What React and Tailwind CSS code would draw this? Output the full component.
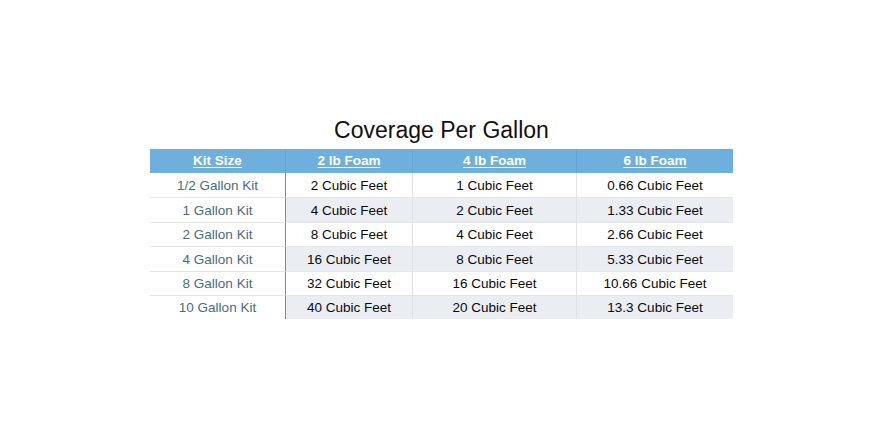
export default function App() {
    const rows = [
        ["1/2 Gallon Kit", "2 Cubic Feet", "1 Cubic Feet", "0.66 Cubic Feet"],
        ["1 Gallon Kit", "4 Cubic Feet", "2 Cubic Feet", "1.33 Cubic Feet"],
        ["2 Gallon Kit", "8 Cubic Feet", "4 Cubic Feet", "2.66 Cubic Feet"],
        ["4 Gallon Kit", "16 Cubic Feet", "8 Cubic Feet", "5.33 Cubic Feet"],
        ["8 Gallon Kit", "32 Cubic Feet", "16 Cubic Feet", "10.66 Cubic Feet"],
        ["10 Gallon Kit", "40 Cubic Feet", "20 Cubic Feet", "13.3 Cubic Feet"],
    ];
    const heights = ["h-[24px]", "h-[25px]", "h-[24px]", "h-[25px]", "h-[24px]", "h-[24px]"];
    const headers = ["Kit Size", "2 lb Foam", "4 lb Foam", "6 lb Foam"];

    return (
        <div className="w-[882px] h-[441px] bg-white flex flex-col items-center pt-[116px] font-['Liberation_Sans',Arial,sans-serif]">
            <h1 className="text-[23px] leading-[28px] text-[#111] ml-[1px]">Coverage Per Gallon</h1>
            <div className="mt-[5px] grid grid-cols-[135px_127px_164px_157px] w-[583px] ml-[1px] border-r border-[#e2e4e6]">
                {headers.map((h, i) => (
                    <div
                        key={h}
                        className={`h-[24px] pt-[1px] flex items-center justify-center bg-[#6eafdd] text-white font-bold text-[13.5px] underline underline-offset-2 ${i > 0 ? "border-l border-[#66a5d2]" : ""}`}
                    >
                        {h}
                    </div>
                ))}
                {rows.map((r, ri) => {
                    const shade = ri % 2 === 1 ? "bg-[#eaedf1]" : "bg-white";
                    return r.map((c, ci) => (
                        <div
                            key={ri + "-" + ci}
                            className={`${heights[ri]} pt-[2px] flex items-center justify-center text-[13.5px] ${ri > 0 ? "border-t border-[#e4e6e9]" : ""} ${
                                ci === 0
                                    ? "bg-white text-[#4b6c79]"
                                    : ci === 1
                                    ? `${shade} text-[#0a0a0a] border-l border-l-[#8c8c8c]`
                                    : `${shade} text-[#0a0a0a] border-l border-l-[#dfe1e4]`
                            }`}
                        >
                            {c}
                        </div>
                    ));
                })}
            </div>
        </div>
    );
}
